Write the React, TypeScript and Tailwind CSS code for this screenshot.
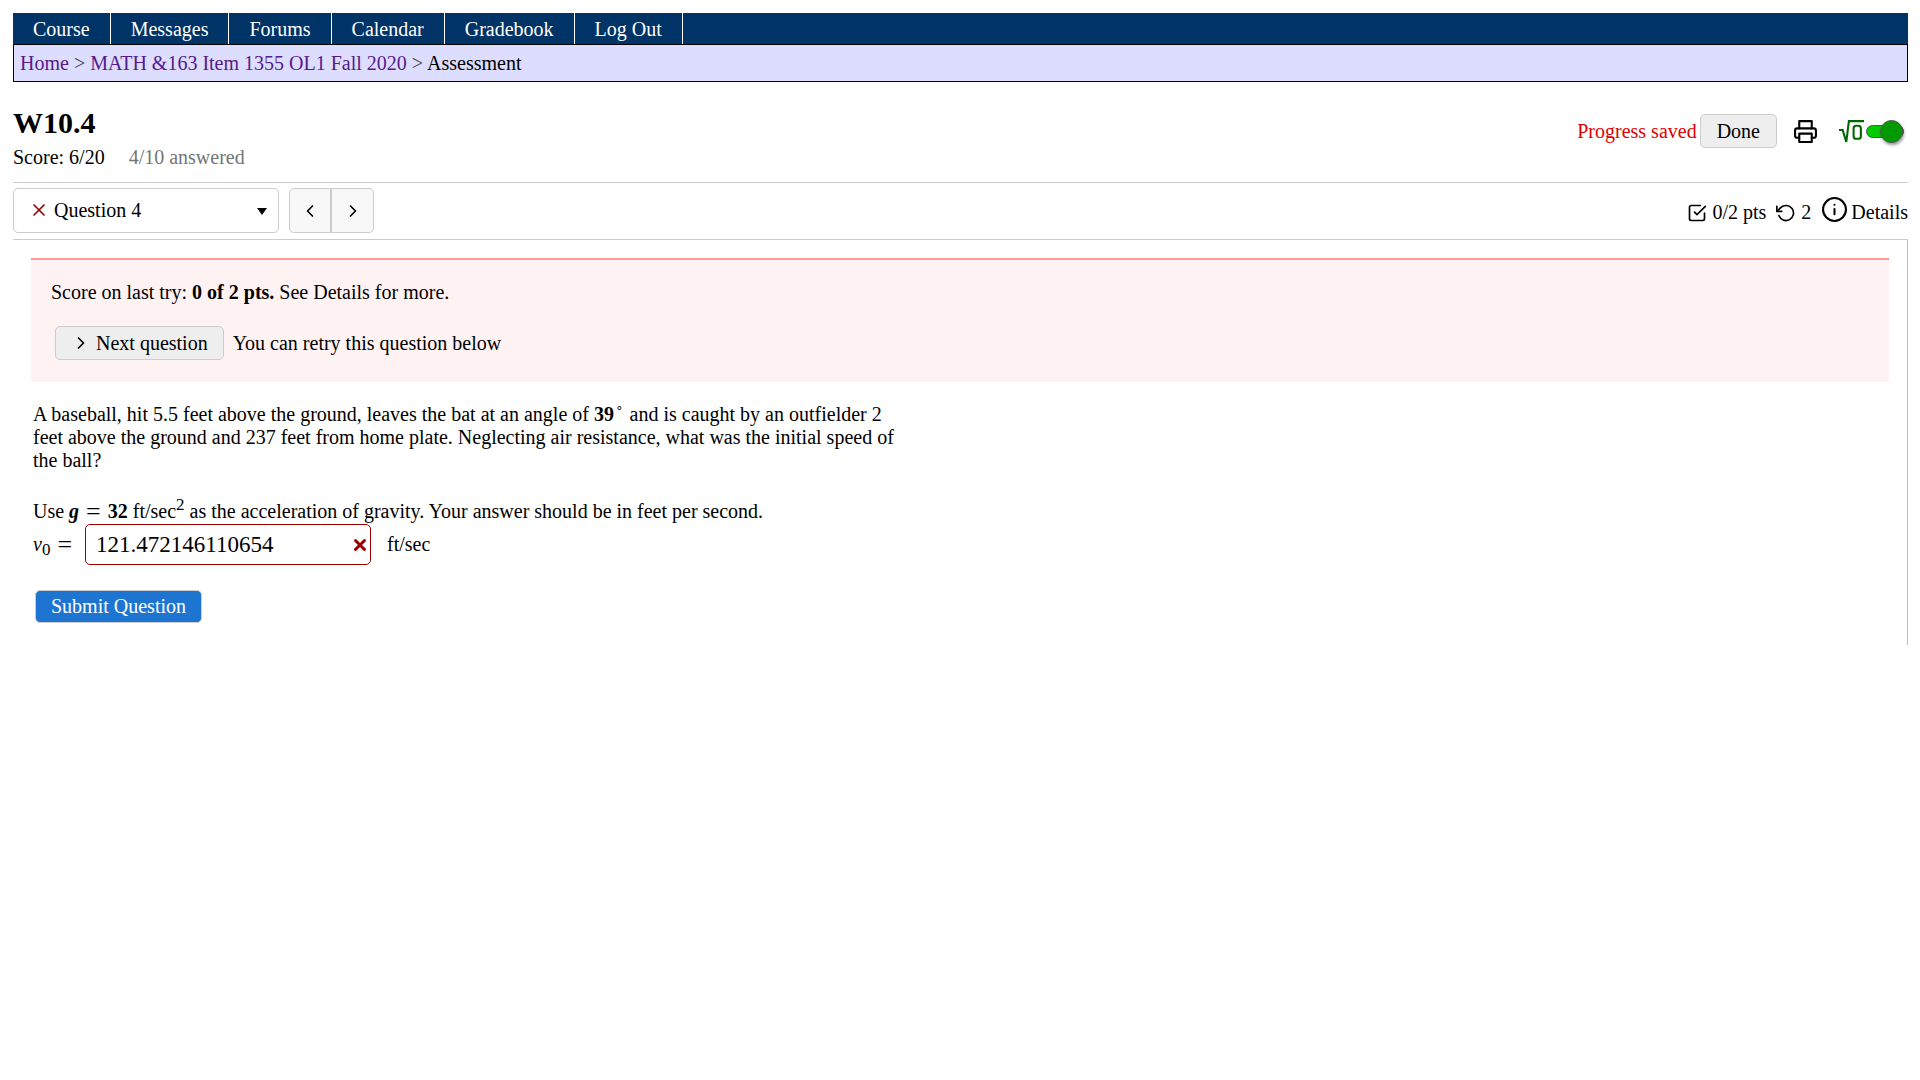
import React, { useState } from 'react';

const icons = {
    printer: ['M6 9V2h12v7', 'M6 18H4a2 2 0 0 1-2-2v-5a2 2 0 0 1 2-2h16a2 2 0 0 1 2 2v5a2 2 0 0 1-2 2h-2', 'M6 14h12v8H6z'],
    checkSquare: ['M9 11l3 3L22 4', 'M21 12v7a2 2 0 0 1-2 2H5a2 2 0 0 1-2-2V5a2 2 0 0 1 2-2h11'],
    rotate: ['M1 4v6h6', 'M3.51 15a9 9 0 1 0 2.13-9.36L1 10'],
    info: ['M1 12a11 11 0 1 0 22 0a11 11 0 1 0-22 0', 'M12 16.5v-5', 'M12 7.5h.01'],
    left: ['M15 18l-6-6 6-6'],
    right: ['M9 18l6-6-6-6'],
    x: ['M18 6L6 18', 'M6 6l12 12'],
};

const Icon: React.FC<{ name: keyof typeof icons; className: string; stroke?: number }> = ({ name, className, stroke = 2 }) => (
    <svg
        viewBox="0 0 24 24"
        fill="none"
        stroke="currentColor"
        strokeWidth={stroke}
        strokeLinecap="round"
        strokeLinejoin="round"
        className={`shrink-0 overflow-visible ${className}`}
        aria-hidden="true"
    >
        {icons[name].map(d => <path key={d} d={d} />)}
    </svg>
);

const navLinks = ['Course', 'Messages', 'Forums', 'Calendar', 'Gradebook', 'Log Out'];

const Equals = () => <span className="mx-[7px] text-[26px] leading-4 align-[-2px]">=</span>;

const App: React.FC = () => {
    const [question, setQuestion] = useState('4');
    const [answer, setAnswer] = useState('121.472146110654');
    const [mathOn, setMathOn] = useState(true);

    return (
        <div className="pl-[13px] pr-3 pt-[13px] font-['Liberation_Serif','Times_New_Roman',serif] text-[20px] leading-[23px] text-black">
            <nav className="flex bg-[#003366] text-white">
                {navLinks.map(link => (
                    <a key={link} href="#" className="px-5 pt-[5px] pb-[3px] border-r border-white">{link}</a>
                ))}
            </nav>

            <div className="border border-black bg-[#ddddff] px-1.5 pt-[7px] pb-1.5">
                <a href="#" className="text-[#551a8b]">Home</a>
                <span className="text-[#444]"> &gt; </span>
                <a href="#" className="text-[#551a8b]">MATH &amp;163 Item 1355 OL1 Fall 2020</a>
                <span className="text-[#444]"> &gt; </span>
                Assessment
            </div>

            <header className="flex justify-between pt-6 pb-[13px] border-b border-[#ccc]">
                <div>
                    <h1 className="text-[30px] leading-[34px] font-bold">W10.4</h1>
                    <div className="flex gap-6 mt-1.5">
                        <span>Score: 6/20</span>
                        <span className="text-[#757575]">4/10 answered</span>
                    </div>
                </div>
                <div className="flex items-center h-[34px] mt-2 mr-1">
                    <span className="text-[#dd0000] mr-[3px]">Progress saved</span>
                    <button className="h-[34px] px-4 bg-[#eee] border border-[#ccc] rounded-[5px]">Done</button>
                    <button aria-label="Print" className="ml-4">
                        <Icon name="printer" className="size-[25px]" />
                    </button>
                    <label className="ml-[21px] flex items-center gap-0.5 cursor-pointer">
                        <svg viewBox="0 0 24 24" className="size-[25px]" fill="none" stroke="#006600" strokeWidth="2" aria-hidden="true">
                            <path d="M0 10.5h3.5L7 22 9.5 2H24" />
                            <rect x="14" y="6.5" width="7" height="12.5" rx="2.5" />
                        </svg>
                        <input
                            type="checkbox"
                            aria-label="Equation editor"
                            checked={mathOn}
                            onChange={e => setMathOn(e.target.checked)}
                            className="peer sr-only"
                        />
                        <span className="flex items-center justify-start peer-checked:justify-end w-[38px] h-[13px] rounded-full border border-[#555] bg-[#00cc00]">
                            <span className="size-[23px] shrink-0 rounded-full border border-[#555] bg-[#009900] shadow-[1px_2px_3px_rgba(0,0,0,0.4)]"></span>
                        </span>
                    </label>
                </div>
            </header>

            <div className="flex justify-between items-center pt-[5px] pb-1.5 border-b border-[#ccc]">
                <div className="flex gap-2.5">
                    <div className="relative">
                        <select
                            aria-label="Question"
                            value={question}
                            onChange={e => setQuestion(e.target.value)}
                            className="appearance-none w-[266px] h-[45px] pl-10 border border-[#ccc] rounded-[5px] bg-white"
                        >
                            <option value="4">Question 4</option>
                        </select>
                        <Icon name="x" className="absolute left-4 top-3 size-5 text-[#990000] pointer-events-none" />
                        <svg viewBox="0 0 10 7" className="absolute right-3 top-5 w-2.5 h-[7px] pointer-events-none" aria-hidden="true">
                            <path d="M0 0h10L5 7z" />
                        </svg>
                    </div>
                    <div className="flex">
                        <button aria-label="Previous question" className="flex items-center justify-center w-[42px] h-[45px] bg-[#f8f8f8] border border-[#ccc] rounded-l-[5px]">
                            <Icon name="left" className="size-5" />
                        </button>
                        <button aria-label="Next question" className="flex items-center justify-center w-[43px] h-[45px] bg-[#f8f8f8] border border-[#ccc] rounded-r-[5px]">
                            <Icon name="right" className="size-5" />
                        </button>
                    </div>
                </div>
                <div className="flex items-center pt-1">
                    <Icon name="checkSquare" className="size-5" />
                    <span className="ml-[5px]">0/2 pts</span>
                    <Icon name="rotate" className="size-5 ml-2.5" />
                    <span className="ml-[5px]">2</span>
                    <button className="flex items-center gap-1 ml-[11px]">
                        <Icon name="info" className="size-[25px] -mt-1.5" />
                        Details
                    </button>
                </div>
            </div>

            <main className="border-r border-[#c0c0c0] px-[18px] pt-[18px] pb-[22px]">
                <section className="border-t-2 border-[#ff9999] bg-[#fff2f2] px-5 pt-[21px] pb-[22px]">
                    <p>
                        Score on last try: <strong>0 of 2 pts.</strong> See Details for more.
                    </p>
                    <div className="flex items-center mt-[22px] ml-1">
                        <button className="flex items-center gap-[5px] h-[34px] px-[15px] bg-[#eee] border border-[#ccc] rounded-[5px]">
                            <Icon name="right" className="size-5" />
                            Next question
                        </button>
                        <span className="ml-[9px]">You can retry this question below</span>
                    </div>
                </section>

                <section className="max-w-[877px] pt-[21px] px-0.5">
                    <p>
                        A baseball, hit 5.5 feet above the ground, leaves the bat at an angle of <b>39</b><span className="mx-0.5">˚</span> and is
                        caught by an outfielder 2 feet above the ground and 237 feet from home plate. Neglecting air resistance,
                        what was the initial speed of the ball?
                    </p>
                    <p className="mt-7">
                        Use <b><i>g</i></b><Equals /><b>32</b> ft/sec<sup className="text-[17px] leading-none">2</sup> as the acceleration of
                        gravity. Your answer should be in feet per second.
                    </p>
                    <div className="flex items-center mt-px">
                        <label htmlFor="answer" className="mr-1.5"><i>v</i><sub className="text-[17px] leading-none">0</sub><Equals /></label>
                        <div className="relative">
                            <input
                                id="answer"
                                type="text"
                                value={answer}
                                onChange={e => setAnswer(e.target.value)}
                                className="w-[286px] h-[41px] pl-2.5 pr-8 text-[23px] border border-[#990000] rounded-[5px]"
                            />
                            <Icon name="x" stroke={4} className="absolute right-0.5 top-3 size-[18px] text-[#990000]" />
                        </div>
                        <span className="ml-4">ft/sec</span>
                    </div>
                </section>

                <button className="mt-[25px] ml-1 h-[33px] px-[15px] text-white bg-[#1e74d1] border border-[#ccc] rounded-[5px]">
                    Submit Question
                </button>
            </main>
        </div>
    );
};

export default App;
